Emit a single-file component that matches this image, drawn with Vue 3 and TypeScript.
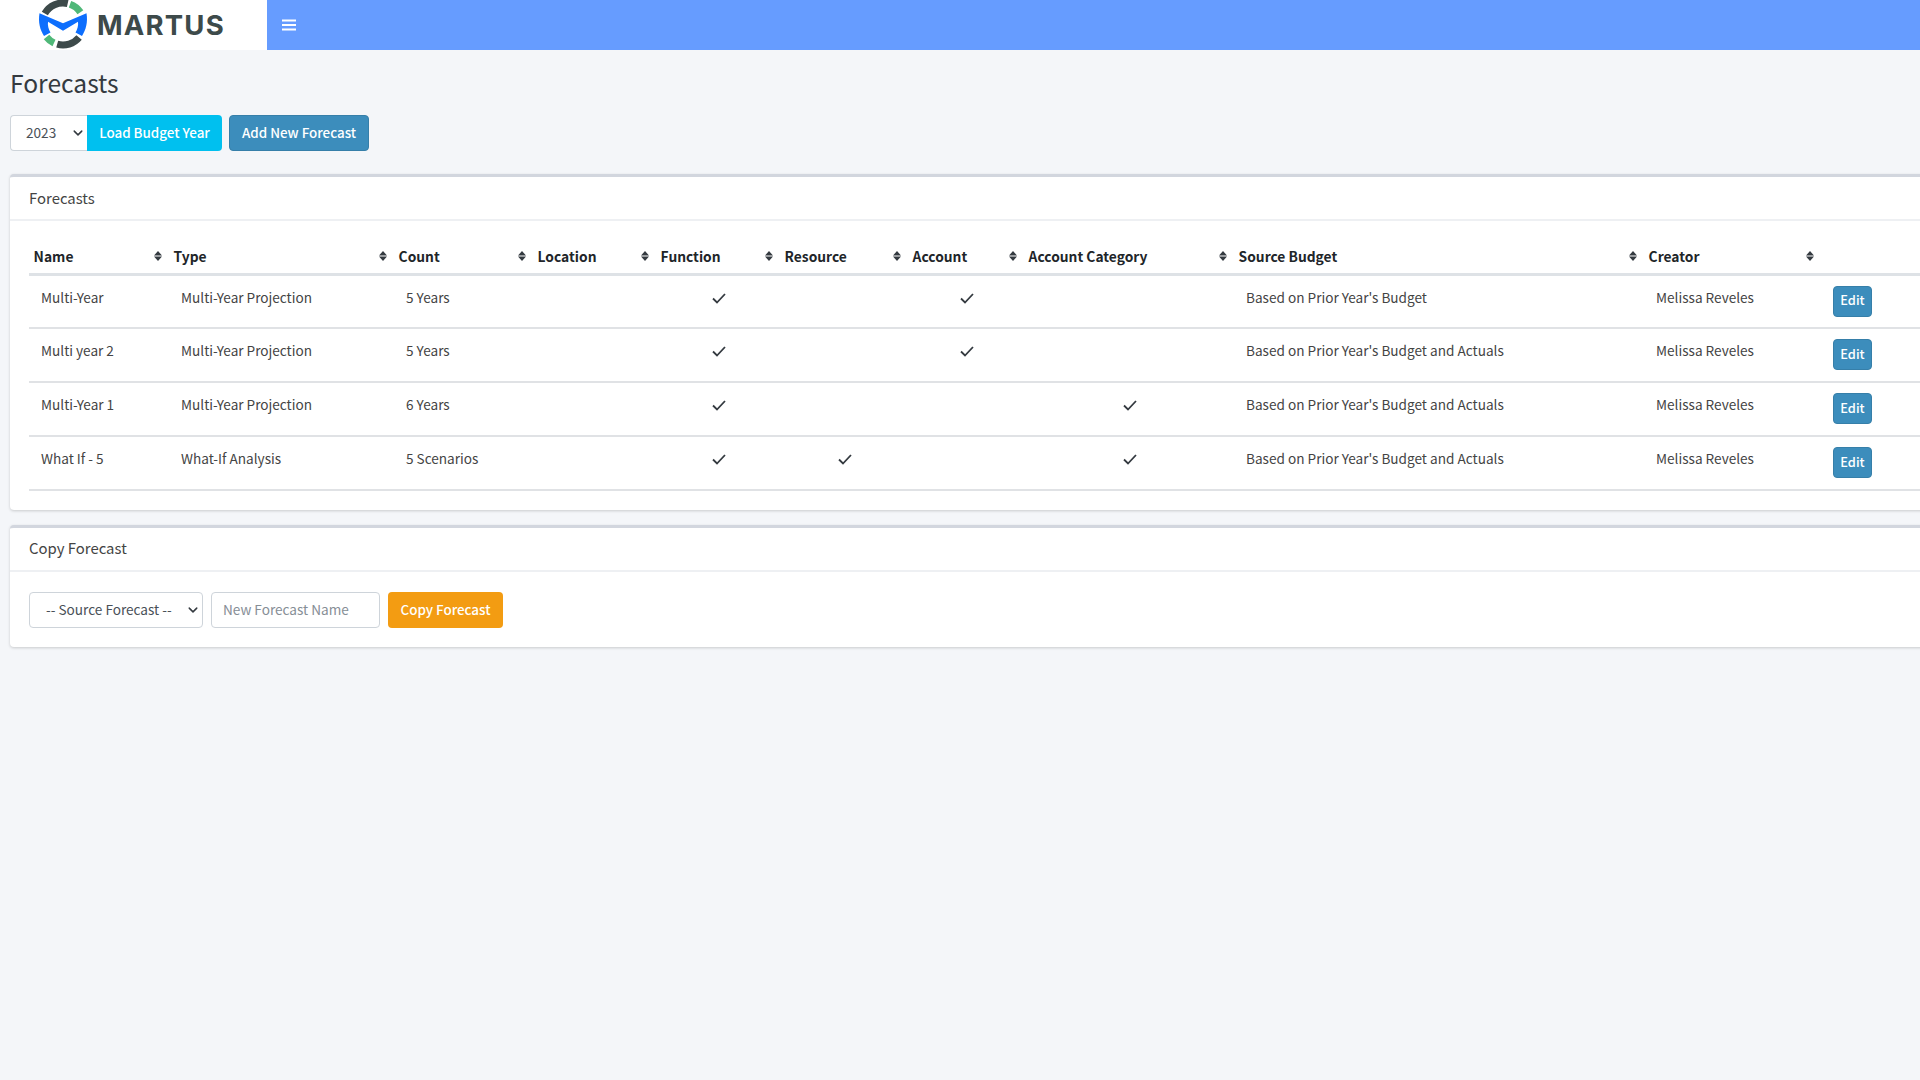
<script setup lang="ts">
interface Row {
  name: string
  type: string
  count: string
  checks: number[]
  source: string
}

const headers: string[] = [
  'Name', 'Type', 'Count', 'Location', 'Function', 'Resource',
  'Account', 'Account Category', 'Source Budget', 'Creator', ''
]
const widths: number[] = [140, 225, 139, 123, 124, 128, 116, 210, 410, 177, 120]

const actuals = "Based on Prior Year's Budget and Actuals"
const rows: Row[] = [
  { name: 'Multi-Year', type: 'Multi-Year Projection', count: '5 Years', checks: [4, 6], source: "Based on Prior Year's Budget" },
  { name: 'Multi year 2', type: 'Multi-Year Projection', count: '5 Years', checks: [4, 6], source: actuals },
  { name: 'Multi-Year 1', type: 'Multi-Year Projection', count: '6 Years', checks: [4, 7], source: actuals },
  { name: 'What If - 5', type: 'What-If Analysis', count: '5 Scenarios', checks: [4, 5, 7], source: actuals }
]
const checkCols: number[] = [3, 4, 5, 6, 7]
</script>

<template>
  <div class="page">
    <header class="topbar">
      <div class="brand">
        <svg class="logo" viewBox="0 0 50 50" width="50" height="50">
          <g fill="none" stroke-width="7">
            <path stroke="#3d4a4a" d="M6.8 14.5A21 21 0 0 1 29.7 4.5" />
            <path stroke="#4fb878" d="M32 5.2A21 21 0 0 1 42.4 13.2" />
            <path stroke="#3d4a4a" d="M41.1 38.5A21 21 0 0 1 19.2 45.2" />
            <path stroke="#4fb878" d="M16 44A21 21 0 0 1 8.5 38" />
          </g>
          <path fill="#0d6efd" d="M1.5 14.3 L25 24.3 L48.5 14.3 C50 23 48 31 44 37 L37.5 33.5 C39.5 30 40.5 26.5 40 22.7 L25 31.7 L10 22.7 C9.5 26.5 10.5 30 12.5 33.5 L6 37 C2 31 0 23 1.5 14.3 Z" />
        </svg>
        <span class="wordmark">MARTUS</span>
      </div>
      <button class="menu-btn" type="button" aria-label="Menu">
        <svg viewBox="0 0 14 12" width="14" height="12">
          <path d="M0 1.5H14M0 6H14M0 10.5H14" stroke="#fff" stroke-width="1.8" />
        </svg>
      </button>
    </header>

    <main class="content">
      <h1 class="title">Forecasts</h1>
      <div class="toolbar">
        <select class="control year-select">
          <option>2023</option>
        </select>
        <button class="btn btn-info joined" type="button">Load Budget Year</button>
        <button class="btn btn-primary add" type="button">Add New Forecast</button>
      </div>

      <section class="card first">
        <div class="card-header">Forecasts</div>
        <div class="table-body">
          <table class="grid">
            <colgroup>
              <col v-for="(w, i) in widths" :key="i" :style="{ width: w + 'px' }" />
            </colgroup>
            <thead>
              <tr>
                <th v-for="(h, i) in headers" :key="i">
                  <div class="th-inner">
                    <span>{{ h }}</span>
                    <svg v-if="i < 10" class="sort" viewBox="0 0 8 10" width="8" height="10">
                      <path d="M4 0 8 4.5H0ZM4 10 0 5.5H8Z" fill="#343a40" />
                    </svg>
                  </div>
                </th>
              </tr>
            </thead>
            <tbody>
              <tr v-for="r in rows" :key="r.name">
                <td>{{ r.name }}</td>
                <td>{{ r.type }}</td>
                <td>{{ r.count }}</td>
                <td v-for="c in checkCols" :key="c" class="check-cell">
                  <svg v-if="r.checks.includes(c)" class="check" viewBox="0 0 14 11" width="14" height="11">
                    <path d="M1 5.5 5 9.5 13 1" fill="none" stroke="#343a40" stroke-width="1.8" />
                  </svg>
                </td>
                <td>{{ r.source }}</td>
                <td>Melissa Reveles</td>
                <td class="action-cell">
                  <button class="btn btn-primary btn-sm" type="button">Edit</button>
                </td>
              </tr>
            </tbody>
          </table>
        </div>
      </section>

      <section class="card second">
        <div class="card-header">Copy Forecast</div>
        <div class="copy-row">
          <select class="control source-select">
            <option>-- Source Forecast --</option>
          </select>
          <input class="control name-input" type="text" placeholder="New Forecast Name" />
          <button class="btn btn-warning" type="button">Copy Forecast</button>
        </div>
      </section>
    </main>
  </div>
</template>

<style>
html, body {
  margin: 0;
  background: #f4f6f9;
  overflow: hidden;
}
</style>

<style scoped>
.page {
  width: 1920px;
  height: 1080px;
  overflow: hidden;
  background: #f4f6f9;
  font-family: "Noto Sans CJK SC", "Noto Sans", sans-serif;
  font-size: 13.6px;
  color: #343a40;
}
.topbar {
  display: flex;
  height: 50px;
  background: #669cff;
}
.brand {
  width: 267px;
  height: 50px;
  background: #fff;
  display: flex;
  align-items: center;
  padding-left: 38px;
  box-sizing: border-box;
  overflow: hidden;
}
.logo {
  flex: none;
  margin-top: -2px;
}
.wordmark {
  margin-left: 9px;
  font-family: Inter, "Liberation Sans", sans-serif;
  font-weight: 700;
  font-size: 27.5px;
  letter-spacing: 1.2px;
  color: #3d4a4a;
  line-height: 50px;
}
.menu-btn {
  margin-left: 15px;
  border: 0;
  padding: 0;
  background: none;
  display: flex;
  align-items: center;
}
.content {
  padding: 0 0 0 10px;
}
.title {
  margin: 0;
  padding-top: 15px;
  font-size: 24.6px;
  font-weight: 400;
  line-height: 34px;
  color: #343a40;
}
.toolbar {
  display: flex;
  margin-top: 16px;
}
.control {
  box-sizing: border-box;
  height: 36px;
  padding-bottom: 2px;
  border: 1px solid #ced4da;
  border-radius: 4px;
  background-color: #fff;
  font: inherit;
  color: #495057;
  outline: none;
}
select.control {
  appearance: none;
  background-image: url("data:image/svg+xml,%3Csvg xmlns='http://www.w3.org/2000/svg' viewBox='0 0 16 16'%3E%3Cpath fill='none' stroke='%23343a40' stroke-linecap='round' stroke-linejoin='round' stroke-width='2.4' d='M2 5l6 6 6-6'/%3E%3C/svg%3E");
  background-repeat: no-repeat;
  background-position: right 3px center;
  background-size: 12px 10px;
}
.year-select {
  width: 77px;
  padding-left: 15px;
  border-right: 0;
  border-radius: 4px 0 0 4px;
}
.btn {
  box-sizing: border-box;
  height: 36px;
  padding: 0 0 2px;
  border: 1px solid transparent;
  border-radius: 4px;
  font: inherit;
  font-size: 13.4px;
  font-weight: 500;
  color: #fff;
  white-space: nowrap;
}
.btn-info {
  background: #00c0ef;
}
.btn-primary {
  background: #3c8dbc;
  border-color: #367fa9;
}
.btn-warning {
  background: #f39c12;
}
.joined {
  width: 135px;
  border-radius: 0 4px 4px 0;
}
.add {
  width: 140px;
  margin-left: 7px;
}
.card {
  width: 1930px;
  box-sizing: border-box;
  background: #fff;
  border-top: 3px solid #d2d6de;
  border-radius: 4px;
  box-shadow: 0 1px 3px rgba(0, 0, 0, 0.18);
}
.first {
  margin-top: 23px;
}
.second {
  margin-top: 15px;
}
.card-header {
  height: 42px;
  padding: 0 19px;
  line-height: 42px;
  font-size: 14.9px;
  color: #444;
  border-bottom: 2px solid #eef0f3;
}
.second .card-header {
  line-height: 40px;
}
.table-body {
  padding: 20px 19px 19px;
}
.grid {
  table-layout: fixed;
  width: 1812px;
  border-collapse: collapse;
}
th {
  height: 33px;
  padding: 0 7px 2px 4.6px;
  box-sizing: border-box;
  border-bottom: 3px solid #dee2e6;
  font-size: 13.8px;
  font-weight: 700;
  color: #212529;
  text-align: left;
}
.th-inner {
  display: flex;
  justify-content: space-between;
  align-items: center;
}
.sort {
  flex: none;
}
td {
  height: 54px;
  padding: 11px 12px 0;
  box-sizing: border-box;
  border-bottom: 2px solid #e0e2e5;
  vertical-align: top;
  color: #444;
  line-height: 20px;
  white-space: nowrap;
}
.check-cell {
  text-align: center;
  padding: 17px 11px 0 13px;
  line-height: 11px;
}
.check {
  display: inline-block;
}
.action-cell {
  padding-top: 10px;
}
.btn-sm {
  display: block;
  width: 39px;
  height: 31px;
  font-size: 12.8px;
}
.copy-row {
  display: flex;
  gap: 8px;
  padding: 20px 19px 19px;
}
.source-select {
  width: 174px;
  padding-left: 16px;
}
.name-input {
  width: 169px;
  padding: 0 11px 2px;
}
.name-input::placeholder {
  color: #868e96;
}
.copy-row .btn {
  width: 115px;
}
</style>
